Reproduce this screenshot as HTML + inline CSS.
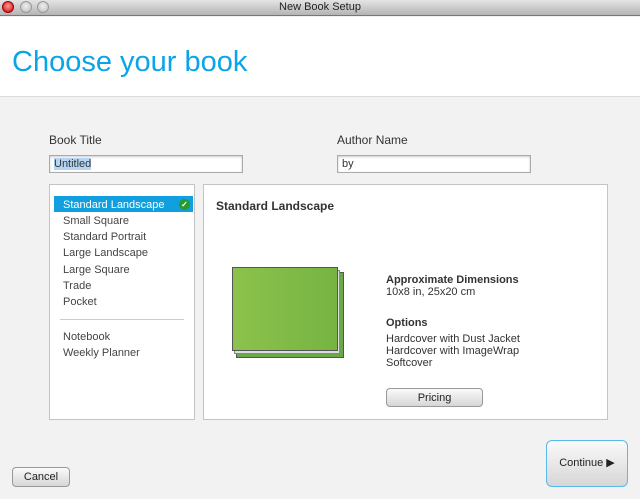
<!DOCTYPE html>
<html><head><style>
*{margin:0;padding:0;box-sizing:border-box}
body{width:640px;height:499px;background:#f2f2f2;font-family:"Liberation Sans",sans-serif;position:relative;overflow:hidden;font-size:11px;color:#333}
.abs{position:absolute}
.title{left:0;top:0;width:640px;height:16px;background:linear-gradient(#e4e4e4,#b4b4b4);border-bottom:1px solid #777;text-align:center;font-size:11px;line-height:15px;color:#222}
.dot{width:12px;height:12px;border-radius:50%;top:1px;border:1px solid #999;background:radial-gradient(circle at 50% 40%,#eee,#bbb)}
.hdr{left:0;top:17px;width:640px;height:80px;background:#fff;border-bottom:1px solid #ddd}
.lbl{font-size:12px;color:#333}
.inp{height:18px;background:#fff;border:1px solid #aaa;box-shadow:inset 0 1px 2px #ccc;font-size:11px;padding:2px 4px;line-height:13px}
.panel{background:#fff;border:1px solid #c4c4c4}
.li{left:63px;font-size:11px;color:#444}
.btn{border:1px solid #999;border-radius:4px;background:linear-gradient(#fafafa,#d6d6d6);text-align:center;color:#222}
</style></head><body>
<div class="abs title">New Book Setup</div>
<div class="abs dot" style="left:2px;background:radial-gradient(circle at 50% 40%,#f99,#c00);border-color:#900"></div>
<div class="abs dot" style="left:20px"></div>
<div class="abs dot" style="left:37px"></div>
<div class="abs hdr"></div>
<div class="abs" style="left:12px;top:46px;font-size:29px;color:#0aa4e8">Choose your book</div>

<div class="abs lbl" style="left:49px;top:133px">Book Title</div>
<div class="abs lbl" style="left:337px;top:133px">Author Name</div>
<div class="abs inp" style="left:49px;top:155px;width:194px"><span style="background:#b5d5f5">Untitled</span></div>
<div class="abs inp" style="left:337px;top:155px;width:194px">by</div>

<div class="abs panel" style="left:49px;top:184px;width:146px;height:236px"></div>
<div class="abs" style="left:54px;top:196px;width:139px;height:16px;background:#10a0e0"></div>
<div class="abs li" style="top:199px;color:#fff">Standard Landscape</div>
<div class="abs" style="left:179px;top:199px;width:11px;height:11px;border-radius:50%;background:#2a9a2a;color:#fff;font-size:8px;line-height:11px;text-align:center;font-weight:bold">✓</div>
<div class="abs li" style="top:215px">Small Square</div>
<div class="abs li" style="top:231px">Standard Portrait</div>
<div class="abs li" style="top:247px">Large Landscape</div>
<div class="abs li" style="top:264px">Large Square</div>
<div class="abs li" style="top:280px">Trade</div>
<div class="abs li" style="top:296px">Pocket</div>
<div class="abs" style="left:60px;top:319px;width:124px;height:1px;background:#ccc"></div>
<div class="abs li" style="top:331px">Notebook</div>
<div class="abs li" style="top:347px">Weekly Planner</div>

<div class="abs panel" style="left:203px;top:184px;width:405px;height:236px"></div>
<div class="abs" style="left:216px;top:199px;font-size:12px;font-weight:bold;color:#333">Standard Landscape</div>
<div class="abs" style="left:236px;top:272px;width:108px;height:86px;background:#6aa84a;border:1px solid #555"></div>
<div class="abs" style="left:234px;top:270px;width:106px;height:84px;background:#ddd;border:1px solid #888"></div>
<div class="abs" style="left:232px;top:267px;width:106px;height:84px;background:linear-gradient(90deg,#8cc24c,#76b442);border:1px solid #555"></div>
<div class="abs" style="left:386px;top:274px;font-weight:bold">Approximate Dimensions</div>
<div class="abs" style="left:386px;top:286px">10x8 in, 25x20 cm</div>
<div class="abs" style="left:386px;top:317px;font-weight:bold">Options</div>
<div class="abs" style="left:386px;top:333px;line-height:12px">Hardcover with Dust Jacket<br>Hardcover with ImageWrap<br>Softcover</div>
<div class="abs btn" style="left:386px;top:388px;width:97px;height:19px;line-height:18px">Pricing</div>

<div class="abs btn" style="left:12px;top:467px;width:58px;height:20px;line-height:19px">Cancel</div>
<div class="abs btn" style="left:546px;top:440px;width:82px;height:47px;line-height:45px;border-color:#5ab8ea;border-radius:6px">Continue ▶</div>
</body></html>
